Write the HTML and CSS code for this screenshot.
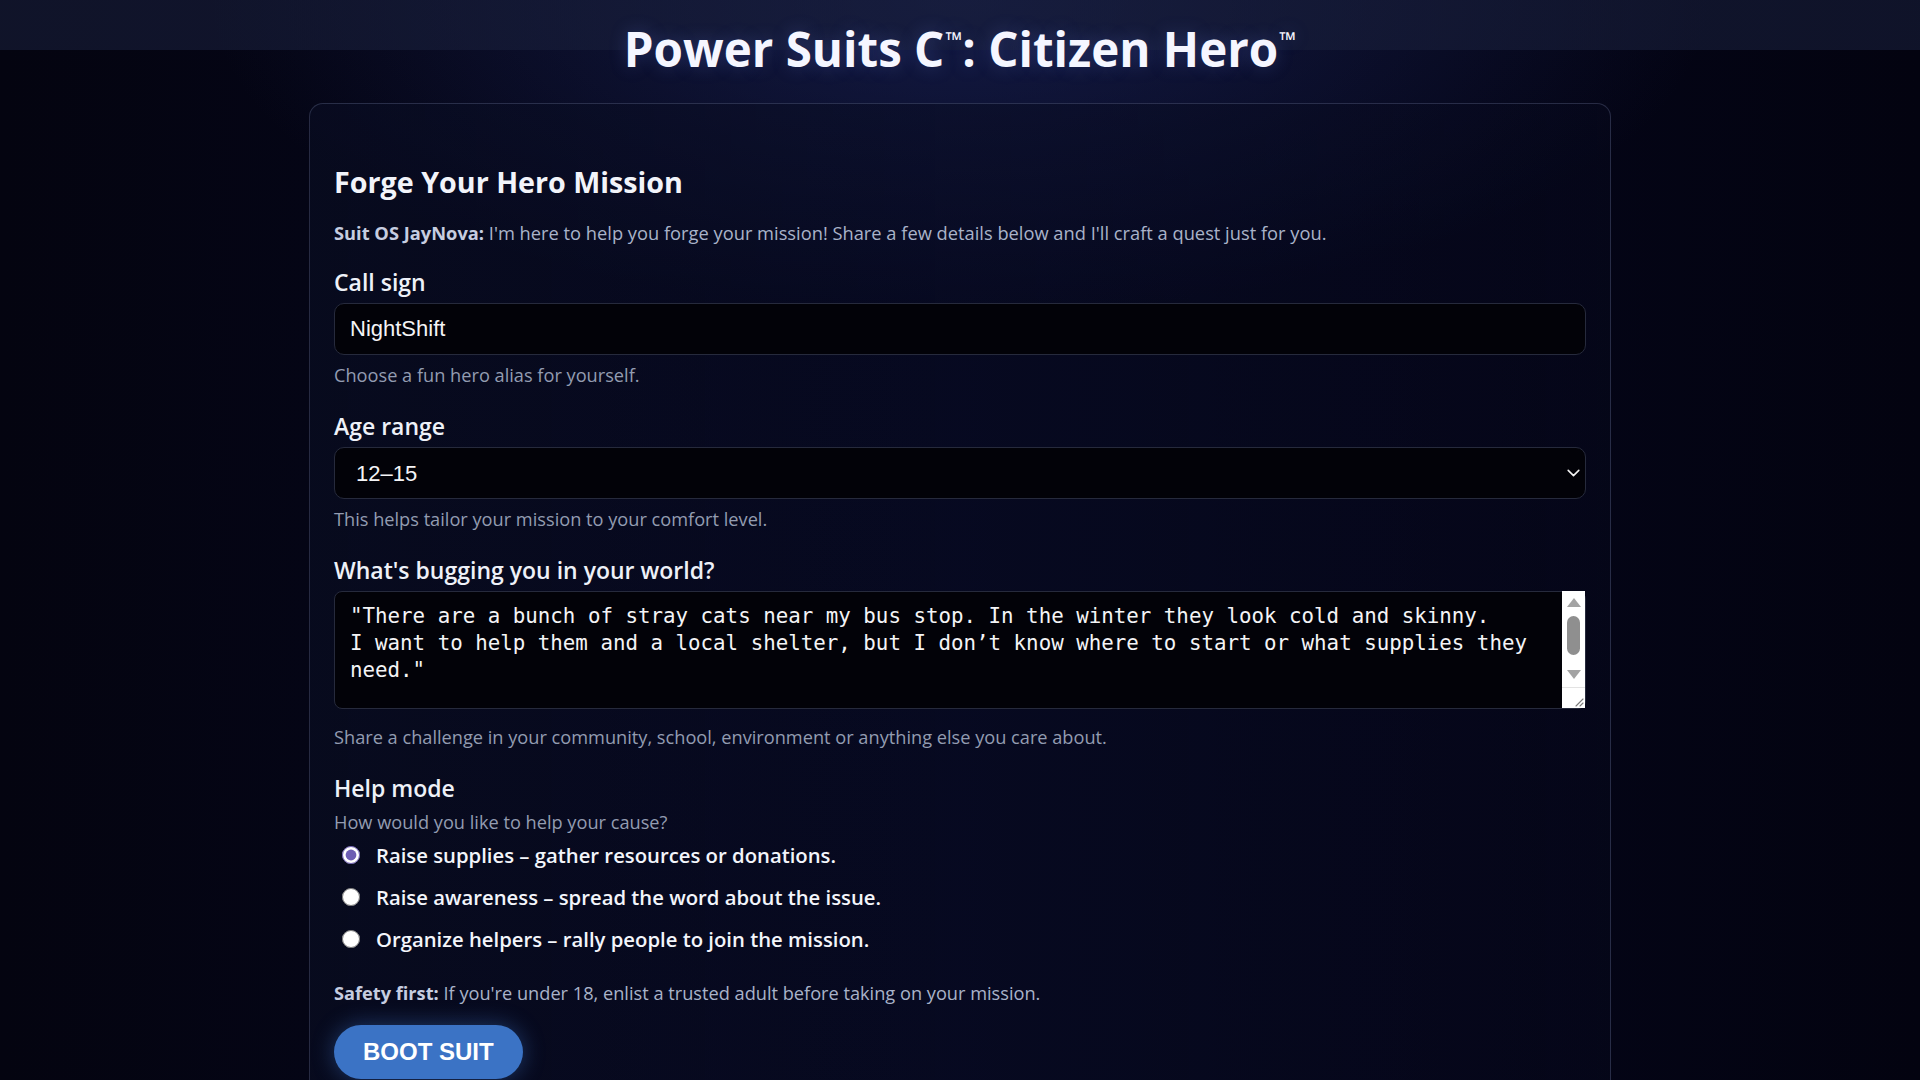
FILE: index.html
```html
<!DOCTYPE html>
<html lang="en">
<head>
  <meta charset="UTF-8">
  <meta name="viewport" content="width=device-width, initial-scale=1.0">
  <title>Power Suits C: Citizen Hero</title>
  <link rel="stylesheet" href="styles.css">
</head>
<body>
  <header class="topbar">
    <h1 class="title">Power Suits C<sup>™</sup>: Citizen Hero<sup>™</sup></h1>
  </header>

  <main class="card">
    <h2 class="card-title">Forge Your Hero Mission</h2>
    <p class="intro"><b>Suit OS JayNova:</b> I'm here to help you forge your mission! Share a few details below and I'll craft a quest just for you.</p>

    <form id="missionForm" class="mission-form">
      <div class="field">
        <label class="field-label" for="callsign">Call sign</label>
        <input type="text" id="callsign" name="callsign" value="NightShift">
        <p class="hint">Choose a fun hero alias for yourself.</p>
      </div>

      <div class="field">
        <label class="field-label" for="age">Age range</label>
        <div class="select-wrap">
          <select id="age" name="age">
            <option>Under 12</option>
            <option selected>12–15</option>
            <option>16–17</option>
            <option>18+</option>
          </select>
          <svg class="chevron" width="13" height="8" viewBox="0 0 13 8"><path d="M1.2 1.4l5.3 5.2 5.3-5.2" fill="none" stroke="#f2f2f2" stroke-width="1.6" stroke-linecap="round" stroke-linejoin="round"/></svg>
        </div>
        <p class="hint">This helps tailor your mission to your comfort level.</p>
      </div>

      <div class="field">
        <label class="field-label" for="problem">What's bugging you in your world?</label>
        <div class="textarea-wrap">
          <textarea id="problem" name="problem">"There are a bunch of stray cats near my bus stop. In the winter they look cold and skinny.
I want to help them and a local shelter, but I don’t know where to start or what supplies they need."</textarea>
          <!-- scrollbar + resize grip as the browser draws them -->
          <div class="fake-scroll" aria-hidden="true">
            <span class="arrow up"></span>
            <span class="thumb"></span>
            <span class="arrow down"></span>
            <span class="grip">
              <svg width="10" height="10" viewBox="0 0 10 10"><path d="M9 2L2 9M9 6L6 9" stroke="#7a7a7a" stroke-width="1.1" stroke-linecap="round"/></svg>
            </span>
          </div>
        </div>
        <p class="hint">Share a challenge in your community, school, environment or anything else you care about.</p>
      </div>

      <div class="field help-mode">
        <div class="field-label">Help mode</div>
        <p class="hint">How would you like to help your cause?</p>
        <label class="option"><input type="radio" name="mode" value="supplies" checked> Raise supplies – gather resources or donations.</label>
        <label class="option"><input type="radio" name="mode" value="awareness"> Raise awareness – spread the word about the issue.</label>
        <label class="option"><input type="radio" name="mode" value="helpers"> Organize helpers – rally people to join the mission.</label>
      </div>

      <p class="safety"><b>Safety first:</b> If you're under 18, enlist a trusted adult before taking on your mission.</p>

      <button type="submit" class="boot-btn">BOOT SUIT</button>
    </form>
  </main>
</body>
</html>
```

FILE: styles.css
```css
/* Reset */
* {
  margin: 0;
  padding: 0;
  box-sizing: border-box;
}

/* Page */
body {
  font-family: "Open Sans", "Noto Sans", sans-serif;
  color: #a9b3c9;
  min-height: 100vh;
  background:
    radial-gradient(ellipse 1000px 420px at 50% 0, rgba(38, 50, 110, 0.45), transparent 75%),
    linear-gradient(to right, #040410, #050720 50%, #030310);
}

/* Top band + title */
.topbar {
  padding-top: 20px;
  text-align: center;
  background: linear-gradient(to bottom, rgba(24, 30, 58, 0.6) 0, rgba(24, 30, 58, 0.6) 50px, transparent 50px);
}

.title {
  font-size: 47.5px;
  line-height: 58px;
  font-weight: 700;
  color: #f5f6ff;
  text-shadow: 0 0 18px rgba(110, 140, 255, 0.25);
}

.title sup {
  font-size: 22px;
  vertical-align: 19px;
  line-height: 0;
  font-weight: 600;
  margin-left: 1px;
}

/* Card */
.card {
  width: 1302px;
  margin: 25px auto 0;
  padding: 60px 24px 40px;
  border: 1px solid rgba(125, 135, 175, 0.28);
  border-radius: 14px;
  background: linear-gradient(to right, rgba(10, 14, 36, 0.6), rgba(8, 10, 30, 0.4));
}

.card-title {
  font-size: 28.7px;
  line-height: 36px;
  font-weight: 700;
  color: #f2f4fa;
  margin-bottom: 21px;
}

.intro {
  font-size: 18.3px;
  line-height: 24px;
  color: #a9b3c9;
  margin-bottom: 23px;
}

.intro b,
.safety b {
  color: #c6cde0;
  font-weight: 700;
}

/* Fields */
.field {
  margin-bottom: 25px;
}

.field-label {
  display: block;
  font-size: 23px;
  line-height: 28px;
  font-weight: 600;
  color: #eef1f8;
  margin-bottom: 7px;
}

.hint {
  font-size: 18.2px;
  line-height: 24px;
  color: #939cb1;
  margin-top: 8px;
}

.field input[type="text"],
.field select,
.field textarea {
  display: block;
  width: 100%;
  background-color: #020208;
  color: #f4f4f6;
  border: 1px solid #262a3c;
  border-radius: 10px;
  outline: none;
}

.field input[type="text"],
.field select {
  height: 52px;
  padding: 0 15px;
  font-family: "Liberation Sans", Arial, sans-serif;
  font-size: 22px;
}

.select-wrap {
  position: relative;
}

.field select {
  appearance: none;
  -webkit-appearance: none;
  padding-left: 21px;
}

.chevron {
  position: absolute;
  right: 6px;
  top: 22px;
  pointer-events: none;
}

.textarea-wrap {
  position: relative;
  margin-bottom: 16px;
}

.field textarea {
  height: 118px;
  padding: 11px 38px 11px 15px;
  font-family: "DejaVu Sans Mono", "Liberation Mono", monospace;
  font-size: 20.8px;
  line-height: 27px;
  overflow: hidden;
  border-radius: 8px;
  resize: none;
}

.field .textarea-wrap + .hint {
  margin-top: 0;
}

/* Scrollbar drawn over the textarea's right edge */
.fake-scroll {
  position: absolute;
  top: 0;
  right: 1px;
  bottom: 1px;
  width: 23px;
  background: #fff;
  display: flex;
  flex-direction: column;
  align-items: center;
}

.fake-scroll .arrow {
  width: 0;
  height: 0;
  border-left: 7px solid transparent;
  border-right: 7px solid transparent;
}

.fake-scroll .up {
  margin-top: 7px;
  border-bottom: 9px solid #a3a3a3;
}

.fake-scroll .thumb {
  width: 13px;
  height: 39px;
  margin-top: 9px;
  border-radius: 7px;
  background: #8f8f8f;
}

.fake-scroll .down {
  margin-top: 15px;
  border-top: 9px solid #a3a3a3;
}

.fake-scroll .grip {
  margin-top: auto;
  width: 100%;
  height: 21px;
  border-top: 1px solid #e3e3e3;
  display: flex;
  align-items: flex-end;
  justify-content: flex-end;
  padding: 0 1px 1px 0;
}

/* Help mode radios */
.help-mode .hint {
  margin-top: 0;
}

.help-mode .field-label {
  margin-bottom: 8px;
}

.option {
  display: flex;
  align-items: center;
  gap: 16px;
  font-size: 20.3px;
  line-height: 28px;
  font-weight: 600;
  color: #f3f5fb;
  margin-top: 14px;
  padding-left: 8px;
  cursor: pointer;
}

.help-mode .hint + .option {
  margin-top: 7px;
}

.option input {
  width: 18px;
  height: 18px;
  accent-color: #6d5db3;
}

.safety {
  font-size: 18.2px;
  line-height: 24px;
  color: #a9b3c9;
  margin-top: 28px;
}

/* Button */
.boot-btn {
  margin-top: 20px;
  height: 54px;
  padding: 0 29px;
  border: none;
  border-radius: 999px;
  background-color: #3b73c5;
  color: #fff;
  font-family: "Liberation Sans", Arial, sans-serif;
  font-size: 24px;
  font-weight: 700;
  cursor: pointer;
  box-shadow: 0 0 22px rgba(59, 115, 197, 0.45);
}

.boot-btn:hover {
  background-color: #4a82d4;
}
```
